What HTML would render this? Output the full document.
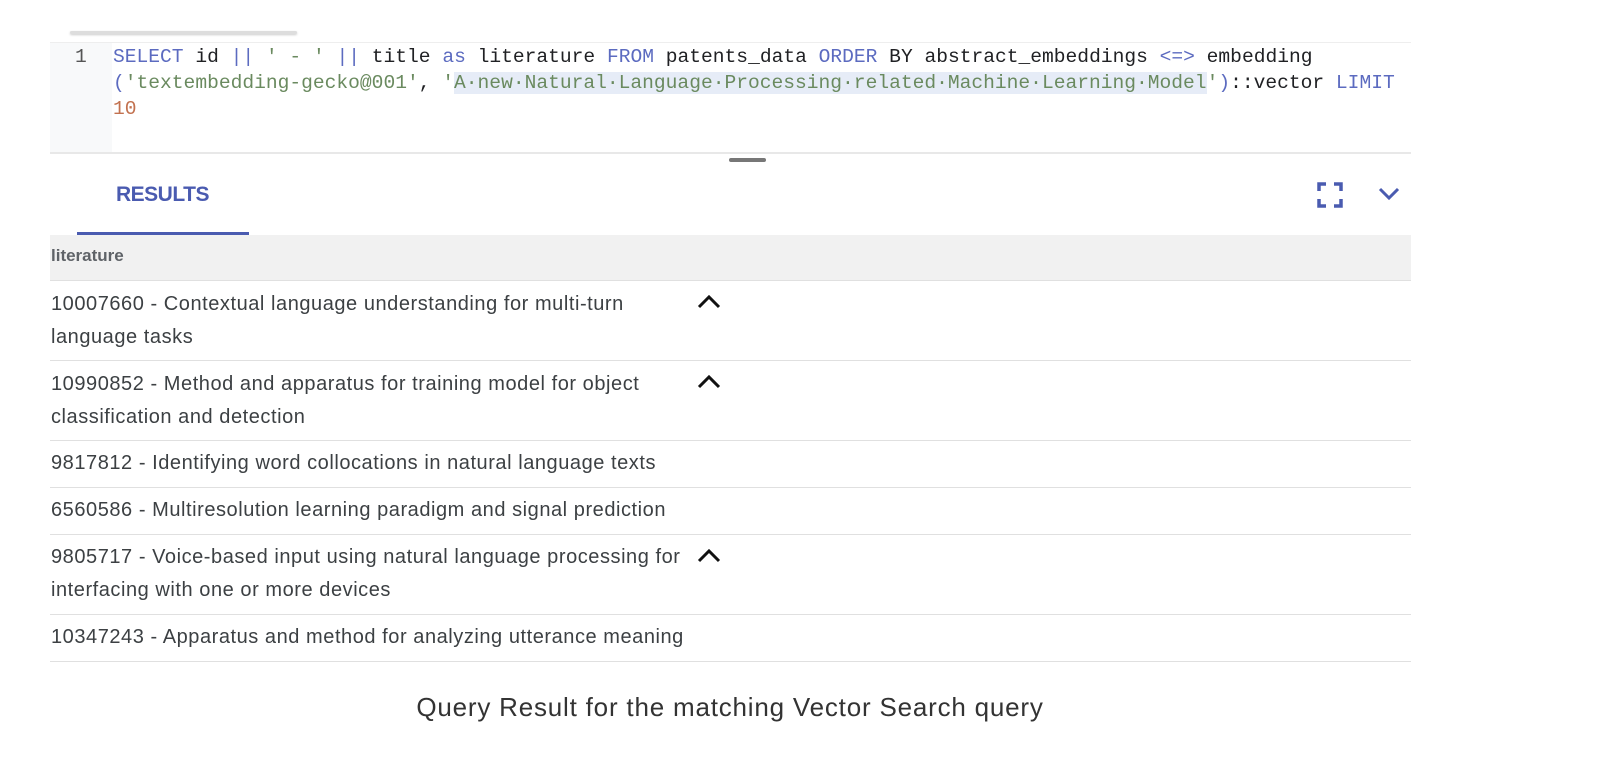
<!DOCTYPE html>
<html><head><style>
body{margin:0;width:1600px;height:772px;background:#fff;position:relative;overflow:hidden;font-family:"Liberation Sans",Arial,sans-serif}
.abs{position:absolute}
.code{font-family:"Liberation Mono",monospace;font-size:19.6px;line-height:26px;color:#202124;white-space:pre}
.kw{color:#5c6bc0}.str{color:#6a8a5f}.num{color:#c2714f}
.hl{background:#e6ecf7}
.row{position:absolute;left:50px;width:1361px;border-bottom:1px solid #e0e0e0;font-size:20px;color:#3c4043;line-height:33px;letter-spacing:0.55px}
.row span.t{position:absolute;left:1px}
</style></head><body>
<div class="abs" style="left:70px;top:31px;width:227px;height:3px;background:#ddd;border-radius:2px;box-shadow:0 1px 2px #ccc"></div>
<div class="abs" style="left:50px;top:42px;width:1361px;height:1px;background:#eee"></div>
<div class="abs" style="left:50px;top:43px;width:62px;height:110px;background:#f8f9fa"></div>
<div class="abs" style="left:50px;top:152px;width:1361px;height:2px;background:#e8e8e8"></div>
<div class="abs code" style="left:75px;top:44px;color:#555">1</div>
<div class="abs code" style="left:113px;top:44px"><span class="kw">SELECT</span> id <span class="kw">||</span> <span class="str">' - '</span> <span class="kw">||</span> title <span class="kw">as</span> literature <span class="kw">FROM</span> patents_data <span class="kw">ORDER</span> BY abstract_embeddings <span class="kw">&lt;=&gt;</span> embedding
<span class="kw">(</span><span class="str">'textembedding-gecko@001'</span>, <span class="str">'<span class="hl">A·new·Natural·Language·Processing·related·Machine·Learning·Model</span>'</span><span class="kw">)</span>::vector <span class="kw">LIMIT</span>
<span class="num">10</span></div>
<div class="abs" style="left:729px;top:158px;width:37px;height:4px;background:#777;border-radius:2px"></div>
<div class="abs" style="left:116px;top:183px;font-size:21px;color:#4a5bb0;font-weight:bold;letter-spacing:-0.5px">RESULTS</div>
<div class="abs" style="left:77px;top:232px;width:172px;height:3px;background:#4a5bb0"></div>
<svg class="abs" style="left:1316px;top:181px" width="28" height="28" viewBox="0 0 28 28" fill="none" stroke="#4a5bb0" stroke-width="3.5"><path d="M3 10V3h7M18 3h7v7M25 18v7h-7M10 25H3v-7"/></svg>
<svg class="abs" style="left:1377px;top:184px" width="24" height="20" viewBox="0 0 24 20" fill="none" stroke="#4a5bb0" stroke-width="3"><path d="M3 5l9 9 9-9"/></svg>
<div class="abs" style="left:50px;top:235px;width:1361px;height:45px;background:#f1f1f1;border-bottom:1px solid #e0e0e0"></div>
<div class="abs" style="left:51px;top:246px;font-size:17px;color:#5f6368;font-weight:bold">literature</div>
<div class="row" style="top:281px;height:79px"><span class="t" style="top:7px">10007660 - Contextual language understanding for multi-turn<br>language tasks</span></div>
<div class="row" style="top:361px;height:79px"><span class="t" style="top:7px">10990852 - Method and apparatus for training model for object<br>classification and detection</span></div>
<div class="row" style="top:441px;height:46px"><span class="t" style="top:6px">9817812 - Identifying word collocations in natural language texts</span></div>
<div class="row" style="top:488px;height:46px"><span class="t" style="top:6px">6560586 - Multiresolution learning paradigm and signal prediction</span></div>
<div class="row" style="top:535px;height:79px"><span class="t" style="top:6px">9805717 - Voice-based input using natural language processing for<br>interfacing with one or more devices</span></div>
<div class="row" style="top:615px;height:46px"><span class="t" style="top:6px">10347243 - Apparatus and method for analyzing utterance meaning</span></div>
<svg class="abs" style="left:697px;top:294px" width="24" height="16" viewBox="0 0 24 16" fill="none" stroke="#111" stroke-width="3"><path d="M2 13l10-10 10 10"/></svg>
<svg class="abs" style="left:697px;top:374px" width="24" height="16" viewBox="0 0 24 16" fill="none" stroke="#111" stroke-width="3"><path d="M2 13l10-10 10 10"/></svg>
<svg class="abs" style="left:697px;top:548px" width="24" height="16" viewBox="0 0 24 16" fill="none" stroke="#111" stroke-width="3"><path d="M2 13l10-10 10 10"/></svg>
<div class="abs" style="left:0;width:1460px;text-align:center;top:692px;font-size:26px;color:#333;letter-spacing:0.8px">Query Result for the matching Vector Search query</div>
</body></html>
